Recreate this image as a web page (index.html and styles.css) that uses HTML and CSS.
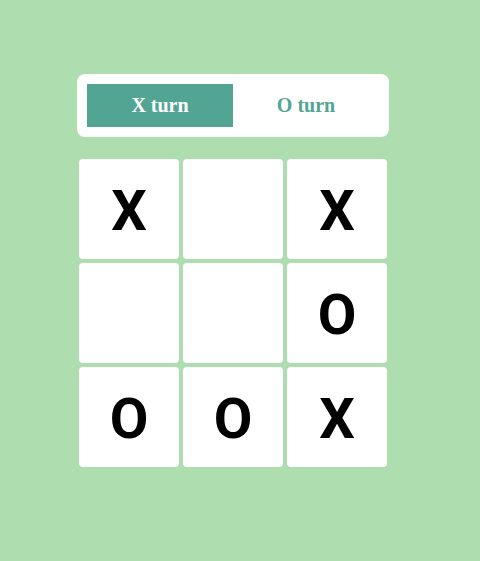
FILE: index.html
```html
<!DOCTYPE html>
<html>
<head>
<meta charset="utf-8">
<link rel="stylesheet" href="styles.css">
</head>
<body>
<div class="game">
  <div class="turns">
    <div class="tab active">X turn</div>
    <div class="tab">O turn</div>
  </div>
  <div class="board">
    <div class="cell">X</div>
    <div class="cell"></div>
    <div class="cell">X</div>
    <div class="cell"></div>
    <div class="cell"></div>
    <div class="cell">O</div>
    <div class="cell">O</div>
    <div class="cell">O</div>
    <div class="cell">X</div>
  </div>
</div>
</body>
</html>
```
FILE: styles.css
```css
html, body {
  margin: 0;
  padding: 0;
  background: #aedeaf;
  height: 100%;
}
.game {
  width: 312px;
  padding: 74px 0 0 77px;
}
.turns {
  background: #ffffff;
  border-radius: 8px;
  padding: 10px;
  display: flex;
}
.tab {
  flex: 1;
  height: 43px;
  display: flex;
  align-items: center;
  justify-content: center;
  font-family: "Liberation Serif", serif;
  font-weight: bold;
  font-size: 20px;
  color: #53a593;
}
.tab.active {
  background: #53a593;
  color: #ffffff;
}
.board {
  margin-top: 20px;
  display: grid;
  grid-template-columns: repeat(3, 104px);
}
.cell {
  margin: 2px;
  height: 100px;
  box-sizing: border-box;
  padding-top: 3px;
  background: #ffffff;
  border-radius: 4px;
  display: flex;
  align-items: center;
  justify-content: center;
  font-family: Roboto, "Liberation Sans", sans-serif;
  font-weight: bold;
  font-size: 56px;
  color: #000000;
}
```
